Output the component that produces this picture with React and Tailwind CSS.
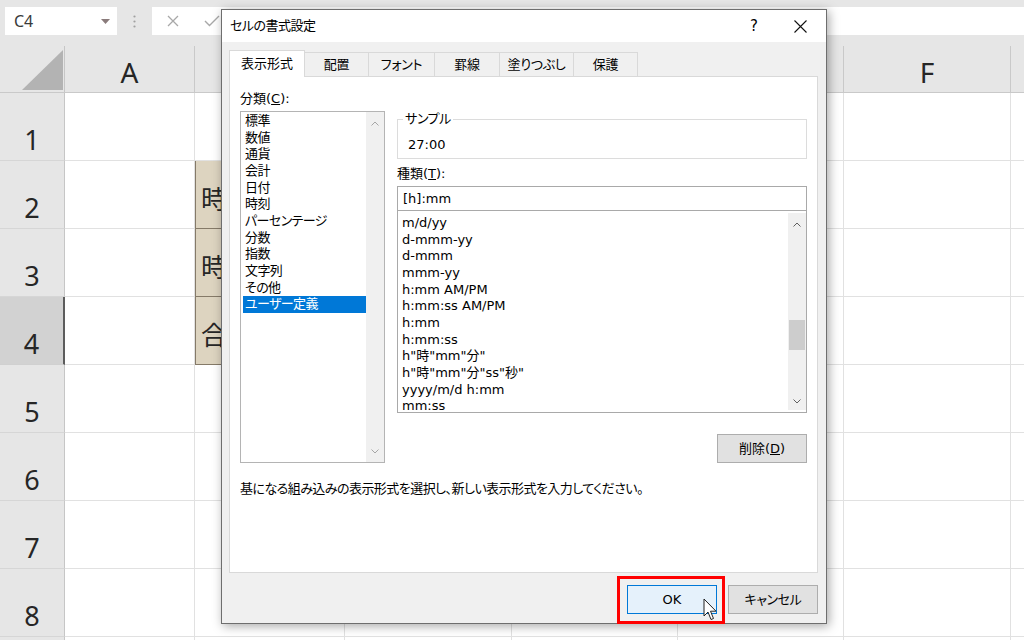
import React from 'react';

const COLS = [
  { key: 'A', w: 'w-[130px]' },
  { key: 'B', w: 'w-[150px]' },
  { key: 'C', w: 'w-[167px]' },
  { key: 'D', w: 'w-[166px]' },
  { key: 'E', w: 'w-[166px]' },
  { key: 'F', w: 'w-[167px]' },
  { key: 'G', w: 'w-[200px]' },
];
const ROWS = [1, 2, 3, 4, 5, 6, 7, 8, 9];
const TAN = { 2: '時間', 3: '時間', 4: '合計' };

const CATS = ['標準', '数値', '通貨', '会計', '日付', '時刻', 'パーセンテージ', '分数', '指数', '文字列', 'その他', 'ユーザー定義'];
const FORMATS = ['m/d/yy', 'd-mmm-yy', 'd-mmm', 'mmm-yy', 'h:mm AM/PM', 'h:mm:ss AM/PM', 'h:mm', 'h:mm:ss', 'h"時"mm"分"', 'h"時"mm"分"ss"秒"', 'yyyy/m/d h:mm', 'mm:ss'];
const TABS = [
  { label: '配置', w: 'w-[64px]' },
  { label: 'フォント', w: 'w-[66px]' },
  { label: '罫線', w: 'w-[65px]' },
  { label: '塗りつぶし', w: 'w-[74px]' },
  { label: '保護', w: 'w-[64px]' },
];

const UI = "font-['DejaVu_Sans','Noto_Sans_CJK_JP',sans-serif] [font-feature-settings:'palt'] text-[13px] text-black";

function Chevron({ up, color }) {
  return (
    <svg width="8" height="5" viewBox="0 0 8 5">
      <polyline
        points={up ? '0.5,4.5 4,1 7.5,4.5' : '0.5,0.5 4,4 7.5,0.5'}
        fill="none"
        stroke={color}
        strokeWidth="1"
      />
    </svg>
  );
}

function TopBar() {
  return (
    <div className="h-[36px] bg-[#e6e6e6] flex items-start pt-[7px] shrink-0">
      <div className="ml-[5px] w-[112px] h-[28px] bg-white flex items-center pl-[9px] pr-[7px]">
        <span className="text-[16px] leading-none text-[#3a3a3a] font-['Noto_Sans',sans-serif]">C4</span>
        <svg className="ml-auto" width="9" height="5" viewBox="0 0 9 5">
          <polygon points="0,0 9,0 4.5,5" fill="#8a7b7b" />
        </svg>
      </div>
      <div className="w-[35px] h-[28px] flex items-center justify-center">
        <svg width="3" height="13" viewBox="0 0 3 13">
          <circle cx="1.5" cy="1.5" r="1.1" fill="#a0a0a0" />
          <circle cx="1.5" cy="6.5" r="1.1" fill="#a0a0a0" />
          <circle cx="1.5" cy="11.5" r="1.1" fill="#a0a0a0" />
        </svg>
      </div>
      <div className="flex-1 h-[28px] bg-white flex items-center">
        <svg className="ml-[15px]" width="12" height="12" viewBox="0 0 12 12">
          <path d="M1 1 L11 11 M11 1 L1 11" stroke="#a8a8a8" strokeWidth="1.3" />
        </svg>
        <svg className="ml-[25px]" width="16" height="12" viewBox="0 0 16 12">
          <path d="M1 6 L5.5 10.5 L15 1" fill="none" stroke="#a8a8a8" strokeWidth="1.4" />
        </svg>
      </div>
    </div>
  );
}

function Sheet() {
  return (
    <div className="flex flex-col font-['Noto_Sans',sans-serif] text-[#262626]">
      <div className="flex items-end h-[57px] shrink-0 bg-[#e6e6e6] border-b border-[#c9c9c9]">
        <div className="w-[65px] h-[46px] shrink-0 border-r border-[#c6c6c6] flex items-end justify-end pr-[1px] pb-[2px]">
          <svg width="41" height="40" viewBox="0 0 41 40">
            <polygon points="0,40 41,40 41,0" fill="#b3b3b3" />
          </svg>
        </div>
        {COLS.map((c) => (
          <div
            key={c.key}
            className={`${c.w} h-[46px] shrink-0 border-r border-[#c9c9c9] flex items-end justify-center pb-[6px] text-[28px] leading-none`}
          >
            {c.key === 'G' ? '' : c.key}
          </div>
        ))}
      </div>
      {ROWS.map((r) => (
        <div key={r} className="flex h-[68px] shrink-0">
          <div
            className={
              r === 4
                ? 'w-[65px] shrink-0 bg-[#d2d2d2] border-b border-b-[#d0d0d0] border-r-2 border-r-[#5c5c5c] flex items-end justify-center pb-[7px] text-[27px] leading-none'
                : 'w-[65px] shrink-0 bg-[#e6e6e6] border-b border-b-[#d6d6d6] border-r border-r-[#c6c6c6] flex items-end justify-center pb-[7px] text-[27px] leading-none'
            }
          >
            {r === 9 ? '' : r}
          </div>
          {COLS.map((c) =>
            c.key === 'B' && TAN[r] ? (
              <div
                key={c.key}
                className={`${c.w} shrink-0 bg-[#ddd4c0] border-l border-r border-b border-[#857a68] flex items-end pl-[5px] pb-[17px] text-[26px] leading-none font-['Noto_Sans_CJK_JP',sans-serif]`}
              >
                {TAN[r]}
              </div>
            ) : (
              <div key={c.key} className={`${c.w} shrink-0 bg-white border-r border-b border-[#e1e1e1]`} />
            )
          )}
        </div>
      ))}
    </div>
  );
}

function CategoryList() {
  return (
    <div className="mt-[2px] h-[352px] border border-[#b4b4b4] flex bg-white">
      <div className="flex-1 pt-[1px] pl-[2px] flex flex-col">
        {CATS.map((c) => (
          <div
            key={c}
            className={
              c === 'ユーザー定義'
                ? 'h-[16.67px] leading-[16.67px] pl-[2px] bg-[#0078d7] text-white whitespace-nowrap tracking-[-0.6px]'
                : 'h-[16.67px] leading-[16.67px] pl-[2px] whitespace-nowrap tracking-[-0.6px]'
            }
          >
            {c}
          </div>
        ))}
      </div>
      <div className="w-[18px] bg-[#f0f0f0] flex flex-col items-center justify-between pt-[9px] pb-[8px]">
        <Chevron up color="#a6a6a6" />
        <Chevron color="#a6a6a6" />
      </div>
    </div>
  );
}

function FormatList() {
  return (
    <div className="h-[202px] border border-t-0 border-[#a9a9a9] flex bg-white overflow-hidden">
      <div className="flex-1 pt-[4px] pl-[4px] flex flex-col overflow-hidden">
        {FORMATS.map((f) => (
          <div key={f} className="h-[16.67px] leading-[16.67px] shrink-0 whitespace-nowrap">
            {f}
          </div>
        ))}
      </div>
      <div className="w-[18px] my-[2px] bg-[#f0f0f0] flex flex-col items-center pt-[9px]">
        <Chevron up color="#606060" />
        <div className="mt-[93px] w-[16px] h-[30px] bg-[#cdcdcd]" />
        <div className="mt-auto mb-[6px]">
          <Chevron color="#606060" />
        </div>
      </div>
    </div>
  );
}

function Dialog() {
  return (
    <div className={`absolute left-[221px] top-[9px] w-[606px] h-[615px] border border-[#6e6e6e] bg-[#f0f0f0] shadow-[2px_2px_10px_rgba(0,0,0,0.35)] flex flex-col ${UI}`}>
      <div className="h-[32px] bg-white flex items-center shrink-0">
        <span className="pl-[8px] tracking-[-0.5px]">セルの書式設定</span>
        <div className="ml-auto flex h-full">
          <div className="w-[46px] flex items-center justify-center text-[15px] font-['DejaVu_Sans',sans-serif]">?</div>
          <div className="w-[46px] mr-[3px] flex items-center justify-center">
            <svg width="13" height="13" viewBox="0 0 13 13">
              <path d="M0.5 0.5 L12.5 12.5 M12.5 0.5 L0.5 12.5" stroke="#111" strokeWidth="1.1" />
            </svg>
          </div>
        </div>
      </div>
      <div className="flex-1 pl-[7px] pr-[8px] flex flex-col">
        <div className="mt-[8px] h-[26px] flex items-end shrink-0">
          <div className="relative z-10 w-[76px] h-[27px] -mb-[1px] bg-white border border-b-0 border-[#d9d9d9] flex items-center justify-center pb-[1px]">
            表示形式
          </div>
          {TABS.map((t) => (
            <div
              key={t.label}
              className={`${t.w} h-[24px] bg-[#f0f0f0] border-t border-r border-[#d9d9d9] flex items-center justify-center whitespace-nowrap tracking-[-0.3px]`}
            >
              {t.label}
            </div>
          ))}
        </div>
        <div className="h-[497px] bg-white border border-[#d9d9d9] shrink-0 flex flex-col">
          <div className="flex pl-[10px] pt-[12px]">
            <div className="w-[145px] flex flex-col">
              <div className="h-[20px] leading-[20px]">
                分類(<span className="underline">C</span>):
              </div>
              <CategoryList />
            </div>
            <div className="ml-[12px] w-[410px] flex flex-col">
              <fieldset className="mt-[20px] border border-[#dcdcdc] pl-[5px] pr-[5px] pb-[3px]">
                <legend className="px-[2px] h-[20px] leading-[20px] tracking-[-0.4px]">サンプル</legend>
                <div className="pt-[6px] pl-[5px] h-[26px] leading-[20px]">27:00</div>
              </fieldset>
              <div className="mt-[5px] h-[20px] leading-[20px]">
                種類(<span className="underline">T</span>):
              </div>
              <div className="mt-[2px] h-[25px] border border-[#a9a9a9] pl-[5px] flex items-center">[h]:mm</div>
              <FormatList />
              <div className="mt-[21px] self-end w-[90px] h-[29px] border border-[#adadad] bg-[#e1e1e1] flex items-center justify-center">
                削除(<span className="underline">D</span>)
              </div>
            </div>
          </div>
          <div className="mt-[16px] pl-[10px] h-[20px] leading-[20px] whitespace-nowrap tracking-[-0.55px]">
            基になる組み込みの表示形式を選択し、新しい表示形式を入力してください。
          </div>
        </div>
        <div className="mt-[12px] flex justify-end gap-[11px]">
          <div className="w-[90px] h-[29px] border border-[#0078d7] bg-[#e5f1fb] flex items-center justify-center">OK</div>
          <div className="w-[90px] h-[29px] border border-[#adadad] bg-[#e1e1e1] flex items-center justify-center tracking-[-0.4px]">キャンセル</div>
        </div>
      </div>
    </div>
  );
}

export default function App() {
  return (
    <div className="relative w-[1024px] h-[640px] overflow-hidden bg-white">
      <TopBar />
      <Sheet />
      <Dialog />
      <div className="absolute left-[617px] top-[576px] w-[108px] h-[48px] border-[3px] border-[#ff0000]" />
      <svg className="absolute left-[703px] top-[598px]" width="16" height="24" viewBox="0 0 16 24">
        <path
          d="M1 1 L1 18 L5 14 L8 21.5 L10.5 20.5 L7.5 13.2 L13 13.2 Z"
          fill="#fff"
          stroke="#222"
          strokeWidth="1"
          strokeLinejoin="miter"
        />
      </svg>
    </div>
  );
}
